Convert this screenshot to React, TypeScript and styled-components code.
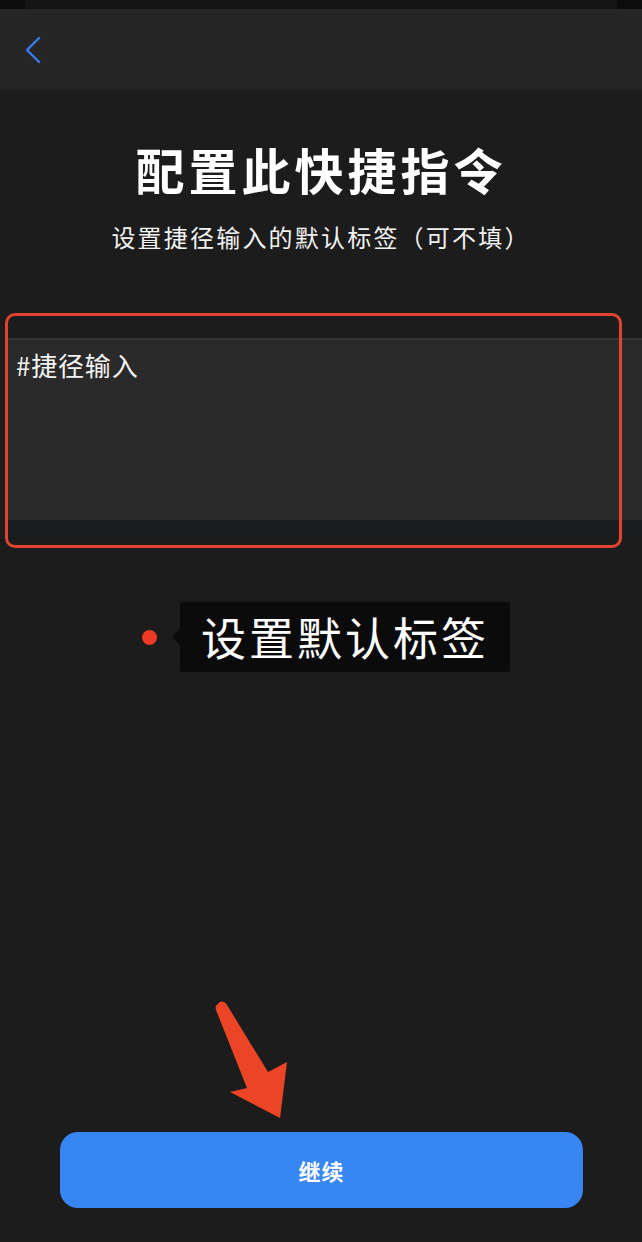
import React from "react";
import styled, { createGlobalStyle } from "styled-components";

const Global = createGlobalStyle`
  html, body { margin: 0; padding: 0; background: #1c1c1c; }
  body { font-family: "Noto Sans CJK SC", "Noto Sans", sans-serif; }
`;

const Page = styled.div`
  position: relative;
  width: 642px;
  height: 1242px;
  overflow: hidden;
  background: #1c1c1c;
  display: flex;
  flex-direction: column;
`;

const TopStrip = styled.div`
  height: 9px;
  background: #0c0c0c;
  padding: 0 25px;
  display: flex;
`;

const TopStripInner = styled.div`
  flex: 1;
  background: #151515;
`;

const NavBar = styled.div`
  height: 80px;
  background: #262626;
  display: flex;
  align-items: center;
  padding-left: 22px;
  border-bottom: 1px solid #202020;
`;

const BackButton = styled.div`
  width: 22px;
  height: 30px;
  display: flex;
  align-items: center;
  justify-content: center;
  margin-top: 2px;
`;

const Header = styled.div`
  display: flex;
  flex-direction: column;
  align-items: center;
  padding-top: 49px;
  gap: 22px;
`;

const Title = styled.h1`
  margin: 0;
  font-size: 49px;
  line-height: 60px;
  font-weight: 700;
  letter-spacing: 4px;
  color: #ffffff;
`;

const Subtitle = styled.p`
  margin: 0;
  font-size: 24px;
  line-height: 32px;
  letter-spacing: 2.2px;
  color: #f2f2f2;
`;

const FieldSection = styled.div`
  margin-top: 85px;
  padding-left: 8px;
  display: flex;
  flex-direction: column;
`;

const Field = styled.div`
  height: 182px;
  background: #2a2a2a;
  border-top: 2px solid #353535;
  padding: 9px 8px;
  box-sizing: border-box;
`;

const FieldText = styled.span`
  font-size: 26px;
  line-height: 32px;
  color: #f4f4f4;
  letter-spacing: 0.8px;
`;

const FieldFoot = styled.div`
  height: 20px;
  background: #1a1c1e;
`;

const RedFrame = styled.div`
  position: absolute;
  left: 5px;
  top: 313px;
  width: 617px;
  height: 235px;
  box-sizing: border-box;
  border: 3px solid #e2432e;
  border-radius: 10px;
  pointer-events: none;
`;

const Annotation = styled.div`
  margin-top: 62px;
  display: flex;
  align-items: center;
  padding-left: 142px;
`;

const Dot = styled.div`
  width: 15px;
  height: 15px;
  border-radius: 50%;
  background: #ee3a24;
  margin-right: 23px;
`;

const Label = styled.div`
  position: relative;
  height: 70px;
  width: 330px;
  background: #0b0b0b;
  border-radius: 3px;
  display: flex;
  align-items: center;
  padding-left: 21px;
  box-sizing: border-box;
  &::before {
    content: "";
    position: absolute;
    left: -8px;
    top: 27px;
    border-top: 8px solid transparent;
    border-bottom: 8px solid transparent;
    border-right: 8px solid #0b0b0b;
  }
`;

const LabelText = styled.span`
  font-size: 45px;
  line-height: 50px;
  color: #ffffff;
  letter-spacing: 3px;
`;

const Spacer = styled.div`
  flex: 1;
`;

const ButtonWrap = styled.div`
  padding: 0 59px 34px 60px;
`;

const ContinueButton = styled.button`
  width: 100%;
  height: 76px;
  border: none;
  border-radius: 18px;
  background: #3786f2;
  color: #ffffff;
  font-family: "Noto Sans CJK SC", sans-serif;
  font-size: 22px;
  font-weight: 700;
  letter-spacing: 1px;
`;

const ArrowOverlay = styled.svg`
  position: absolute;
  left: 200px;
  top: 995px;
  width: 100px;
  height: 130px;
  pointer-events: none;
`;

export default function App() {
  return (
    <Page>
      <Global />
      <TopStrip>
        <TopStripInner />
      </TopStrip>
      <NavBar>
        <BackButton>
          <svg width="18" height="28" viewBox="0 0 18 28">
            <path d="M15 2 L3 14 L15 26" fill="none" stroke="#3a7cf0" strokeWidth="2.4" strokeLinecap="round" strokeLinejoin="round" />
          </svg>
        </BackButton>
      </NavBar>
      <Header>
        <Title>配置此快捷指令</Title>
        <Subtitle>设置捷径输入的默认标签（可不填）</Subtitle>
      </Header>
      <FieldSection>
        <Field>
          <FieldText>#捷径输入</FieldText>
        </Field>
        <FieldFoot />
      </FieldSection>
      <Annotation>
        <Dot />
        <Label>
          <LabelText>设置默认标签</LabelText>
        </Label>
      </Annotation>
      <Spacer />
      <ButtonWrap>
        <ContinueButton>继续</ContinueButton>
      </ButtonWrap>
      <RedFrame />
      <ArrowOverlay viewBox="0 0 100 130">
        <path d="M18 9 C20 5 25 6 27 10 L68 77 L87 67 L80 123 L30 97 L47 93 L16 15 C15 12 16 10 18 9 Z" fill="#ec4525" />
      </ArrowOverlay>
    </Page>
  );
}
